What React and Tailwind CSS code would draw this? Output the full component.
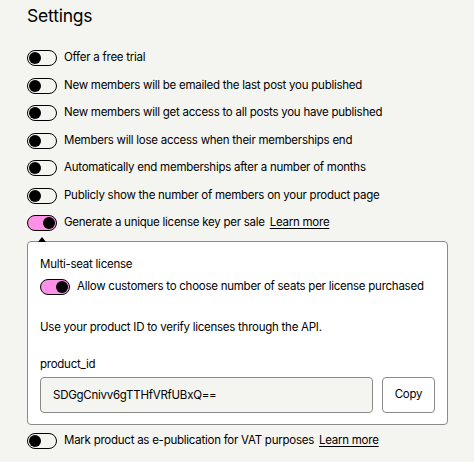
import { useState } from "react";

const font = { fontFamily: "Inter, 'Liberation Sans', sans-serif" };

function Toggle({ on }) {
  return (
    <span
      className={`relative inline-flex h-[16px] w-[30px] shrink-0 items-center rounded-full border border-black ${
        on ? "justify-end bg-[#ff90e8]" : "justify-start bg-[#f4f4f0]"
      }`}
    >
      <span className="mx-[1px] h-[12px] w-[12px] rounded-full bg-black" />
    </span>
  );
}

function Row({ on, label, link }) {
  return (
    <label className="flex h-[16px] items-center gap-[7px] whitespace-nowrap text-[11.5px] tracking-[-0.25px] text-black">
      <Toggle on={on} />
      <span>
        {label}
        {link ? <a className="ml-[5px] underline underline-offset-2">Learn more</a> : null}
      </span>
    </label>
  );
}

const rows = [
  "Offer a free trial",
  "New members will be emailed the last post you published",
  "New members will get access to all posts you have published",
  "Members will lose access when their memberships end",
  "Automatically end memberships after a number of months",
  "Publicly show the number of members on your product page",
];

export default function App() {
  const [productId] = useState("SDGgCnivv6gTTHfVRfUBxQ==");

  return (
    <div className="min-h-screen bg-[#f4f4f0] px-[27px] pt-[4px]" style={font}>
      <h2 className="text-[17.5px] leading-[24px] tracking-[-0.2px] text-black">Settings</h2>

      <div className="mt-[22px] flex flex-col gap-[11.5px]">
        {rows.map((label) => (
          <Row key={label} label={label} />
        ))}
        <Row on label="Generate a unique license key per sale" link />
      </div>

      <div className="relative mt-[10px] w-[421px] rounded-[4px] border border-[#8a8a8a] bg-white px-[12px] pb-[11px] pt-[13px] text-[11.5px] tracking-[-0.25px] text-black">
        <span className="absolute -top-[5px] left-[10px] h-0 w-0 border-x-[4px] border-b-[5px] border-x-transparent border-b-black" />
        <div className="leading-[18px]">Multi-seat license</div>
        <label className="mt-[6px] flex h-[16px] items-center gap-[7px] whitespace-nowrap">
          <Toggle on />
          <span>Allow customers to choose number of seats per license purchased</span>
        </label>
        <p className="mt-[23px] leading-[18px]">Use your product ID to verify licenses through the API.</p>
        <div className="mt-[19px] leading-[18px]">product_id</div>
        <div className="mt-[4px] flex gap-[9px]">
          <input
            readOnly
            value={productId}
            className="h-[36px] min-w-0 flex-1 rounded-[4px] border border-[#8a8a8a] bg-[#f4f4f0] px-[12px] text-[11.5px] tracking-[-0.25px] text-black outline-none"
            style={font}
          />
          <button className="h-[36px] w-[53px] rounded-[4px] border border-[#8a8a8a] bg-white text-[11.5px] tracking-[-0.25px] text-black">
            Copy
          </button>
        </div>
      </div>

      <div className="mt-[8px]">
        <Row label="Mark product as e-publication for VAT purposes" link />
      </div>
    </div>
  );
}
